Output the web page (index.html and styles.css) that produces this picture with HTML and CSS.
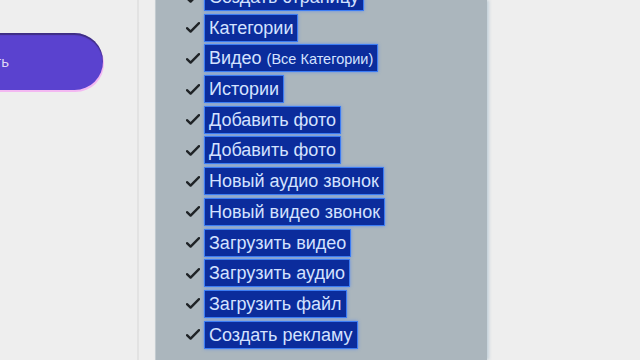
FILE: index.html
```html
<!DOCTYPE html>
<html lang="ru">
<head>
<meta charset="utf-8">
<title>Права</title>
<link rel="stylesheet" href="styles.css">
</head>
<body>
<div class="page">
  <aside class="sidebar">
    <div class="btn"><span>Опубликовать</span></div>
  </aside>
  <main class="panel">
    <ul class="list">
      <li class="row"><svg class="check" viewBox="0 0 14 11"><path d="M1 6.2 L4.6 9.6 L13 1.2" /></svg><span class="sel">Создать страницу</span></li>
      <li class="row"><svg class="check" viewBox="0 0 14 11"><path d="M1 6.2 L4.6 9.6 L13 1.2" /></svg><span class="sel">Категории</span></li>
      <li class="row"><svg class="check" viewBox="0 0 14 11"><path d="M1 6.2 L4.6 9.6 L13 1.2" /></svg><span class="sel">Видео <small>(Все Категории)</small></span></li>
      <li class="row"><svg class="check" viewBox="0 0 14 11"><path d="M1 6.2 L4.6 9.6 L13 1.2" /></svg><span class="sel">Истории</span></li>
      <li class="row"><svg class="check" viewBox="0 0 14 11"><path d="M1 6.2 L4.6 9.6 L13 1.2" /></svg><span class="sel">Добавить фото</span></li>
      <li class="row"><svg class="check" viewBox="0 0 14 11"><path d="M1 6.2 L4.6 9.6 L13 1.2" /></svg><span class="sel">Добавить фото</span></li>
      <li class="row"><svg class="check" viewBox="0 0 14 11"><path d="M1 6.2 L4.6 9.6 L13 1.2" /></svg><span class="sel">Новый аудио звонок</span></li>
      <li class="row"><svg class="check" viewBox="0 0 14 11"><path d="M1 6.2 L4.6 9.6 L13 1.2" /></svg><span class="sel">Новый видео звонок</span></li>
      <li class="row"><svg class="check" viewBox="0 0 14 11"><path d="M1 6.2 L4.6 9.6 L13 1.2" /></svg><span class="sel">Загрузить видео</span></li>
      <li class="row"><svg class="check" viewBox="0 0 14 11"><path d="M1 6.2 L4.6 9.6 L13 1.2" /></svg><span class="sel">Загрузить аудио</span></li>
      <li class="row"><svg class="check" viewBox="0 0 14 11"><path d="M1 6.2 L4.6 9.6 L13 1.2" /></svg><span class="sel">Загрузить файл</span></li>
      <li class="row"><svg class="check" viewBox="0 0 14 11"><path d="M1 6.2 L4.6 9.6 L13 1.2" /></svg><span class="sel">Создать рекламу</span></li>
    </ul>
  </main>
  <div class="rest"></div>
</div>
</body>
</html>
```

FILE: styles.css
```css
* { box-sizing: border-box; }
html, body {
  margin: 0;
  padding: 0;
  width: 640px;
  height: 360px;
  overflow: hidden;
  background: #eeeeee;
  font-family: "Liberation Sans", Arial, sans-serif;
}
.page {
  display: flex;
  height: 360px;
  gap: 16px;
}
.sidebar {
  width: 139px;
  flex: none;
  border-right: 2px solid #e2e2e2;
  overflow: hidden;
  padding-top: 33px;
}
.btn {
  width: 200px;
  height: 57px;
  margin-left: -97px;
  padding-right: 94px;
  border-radius: 29px;
  background: #5a42cf;
  display: flex;
  align-items: center;
  justify-content: flex-end;
  color: #ddd6f4;
  font-size: 15px;
  box-shadow: inset 0 2px 1px rgba(40, 30, 70, 0.55), 1px 2px 0 #f3b8f2;
}
.panel {
  width: 332px;
  flex: none;
  background: #abb6bd;
  border-left: 1px solid #c3cbd0;
  box-shadow: 2px 0 3px rgba(190, 205, 215, 0.9);
  overflow: hidden;
  padding-left: 30px;
}
.list {
  list-style: none;
  margin: -16px 0 0 0;
  padding: 0;
  display: flex;
  flex-direction: column;
  gap: 4.7px;
}
.row {
  display: flex;
  align-items: center;
  gap: 5px;
  height: 26px;
}
.check {
  width: 14px;
  height: 11px;
  flex: none;
}
.check path {
  fill: none;
  stroke: #1f2326;
  stroke-width: 2.4;
  stroke-linecap: round;
  stroke-linejoin: round;
}
.sel {
  height: 26px;
  line-height: 26px;
  padding: 0 4px;
  background: #0b2c9c;
  color: #d4e2ff;
  font-size: 18px;
  white-space: nowrap;
  box-shadow: 0 0 0 1px #3c7cf4, 0 0 3px 1px rgba(70, 130, 255, 0.7);
}
.sel small {
  font-size: 14.5px;
}
.rest {
  flex: 1;
}
```
